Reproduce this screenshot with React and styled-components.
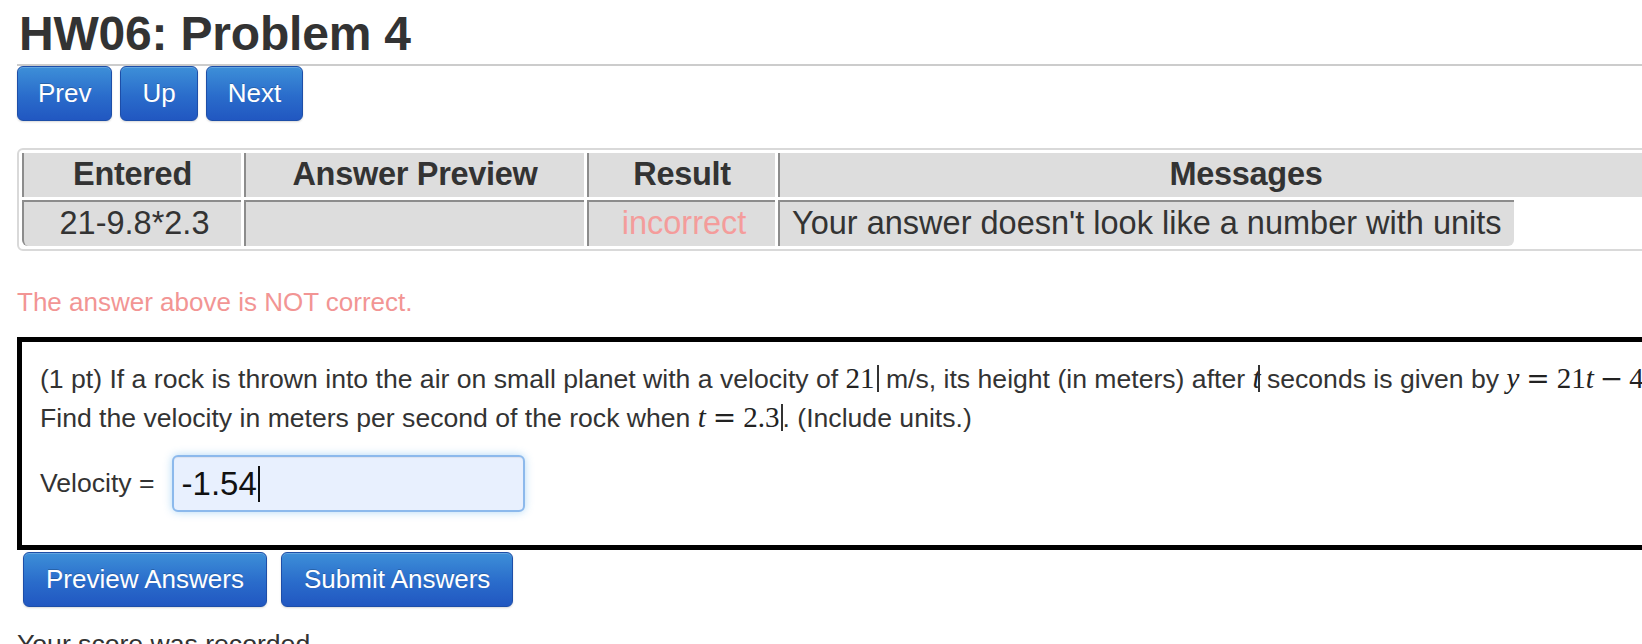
import React from 'react';
import styled, { createGlobalStyle } from 'styled-components';

const GlobalStyle = createGlobalStyle`
  html, body {
    margin: 0;
    padding: 0;
    overflow: hidden;
    background: #ffffff;
  }
  body {
    font-family: "Liberation Sans", Arial, Helvetica, sans-serif;
    color: #333333;
  }
`;

const Page = styled.div`
  width: 1900px;
  padding: 0 0 0 17px;
`;

const Title = styled.h1`
  margin: 0;
  padding: 7px 0 0 2px;
  font-size: 48px;
  line-height: 53px;
  font-weight: bold;
  color: #333333;
  letter-spacing: -0.2px;
`;

const Rule = styled.div`
  height: 2px;
  background: #cccccc;
  margin-top: 4px;
`;

const ButtonRow = styled.div`
  display: flex;
  gap: ${(p) => p.gap || 8}px;
  padding-left: ${(p) => p.indent || 0}px;
`;

const BlueButton = styled.button`
  font-family: "Liberation Sans", Arial, Helvetica, sans-serif;
  font-size: 26px;
  color: #ffffff;
  height: ${(p) => p.h || 55}px;
  padding: 0 ${(p) => p.pad || 21}px;
  border: 1px solid #1d4ea8;
  border-radius: 6px;
  background: linear-gradient(to bottom, #3d8fd8 0%, #2a6ccb 55%, #2157c1 100%);
  box-shadow: inset 0 1px 0 rgba(255, 255, 255, 0.2), 0 1px 2px rgba(0, 0, 0, 0.15);
  text-shadow: 0 -1px 0 rgba(0, 0, 0, 0.2);
  cursor: pointer;
`;

const ResultsTable = styled.table`
  margin-top: 27px;
  width: 1700px;
  border: 2px solid #d9d9d9;
  border-radius: 6px;
  border-spacing: 3px;
  border-collapse: separate;
  table-layout: fixed;
  font-size: 32.5px;
`;

const HeadCell = styled.th`
  background: #dddddd;
  border-left: 2px solid #8c8c8c;
  height: 44px;
  padding: 0 8px;
  font-weight: bold;
  color: #333333;
  text-align: center;
  letter-spacing: -0.3px;
  line-height: 1.1;
`;

const DataCell = styled.td`
  background: ${(p) => (p.blank ? 'transparent' : '#dddddd')};
  border-left: ${(p) => (p.blank ? 'none' : '2px solid #8c8c8c')};
  border-top: ${(p) => (p.blank ? 'none' : '2px solid #8c8c8c')};
  border-radius: ${(p) => p.radius || '0'};
  height: 44px;
  padding: 0 8px 0 12px;
  color: ${(p) => p.color || '#333333'};
  text-align: ${(p) => p.align || 'center'};
  white-space: nowrap;
  line-height: 1.1;
`;

const Notice = styled.p`
  margin: 36px 0 0 0;
  font-size: 26px;
  line-height: 30px;
  color: #f29594;
`;

const ProblemBox = styled.div`
  margin-top: 20px;
  border: 5px solid #000000;
  padding: 18px 18px 33px 18px;
  font-size: 26.6px;
  line-height: 39px;
  color: #333333;
`;

const Line = styled.div`
  white-space: nowrap;
  height: 39px;
`;

const MathText = styled.span`
  font-family: "Liberation Serif", "DejaVu Serif", serif;
  font-size: 29px;
  line-height: 1;
  font-style: ${(p) => (p.italic ? 'italic' : 'normal')};
  color: #222222;
`;

const MathOp = styled.span`
  font-family: "DejaVu Serif", "Liberation Serif", serif;
  font-size: 28px;
  line-height: 1;
  padding: 0 ${(p) => p.space || 7}px;
  color: #222222;
`;

const Bar = styled.span`
  display: inline-block;
  width: 2px;
  height: 27px;
  background: #333333;
  vertical-align: -4px;
  margin: 0 ${(p) => p.after || 0}px 0 ${(p) => p.before || 2}px;
`;

const AnswerRow = styled.div`
  display: flex;
  align-items: center;
  gap: 17px;
  margin-top: 17px;
`;

const Label = styled.span`
  font-size: 26.6px;
`;

const AnswerInput = styled.div`
  width: 353px;
  height: 57px;
  box-sizing: border-box;
  display: flex;
  align-items: center;
  padding-left: 8px;
  background: #e8f0fe;
  border: 2px solid #8cb9ec;
  border-radius: 6px;
  box-shadow: 0 0 8px rgba(82, 168, 236, 0.45), inset 0 1px 1px rgba(0, 0, 0, 0.06);
  font-size: 33px;
  line-height: 1;
  color: #111111;
`;

const Caret = styled.span`
  display: inline-block;
  width: 2px;
  height: 36px;
  background: #111111;
  margin-left: 1px;
`;

const SubmitArea = styled.div`
  margin-top: 2px;
`;

const Footer = styled.p`
  margin: 22px 0 0 0;
  font-size: 26.6px;
  line-height: 30px;
  color: #333333;
`;

function App() {
  return (
    <Page>
      <GlobalStyle />
      <Title>HW06: Problem 4</Title>
      <Rule />
      <ButtonRow gap={8}>
        <BlueButton pad={20}>Prev</BlueButton>
        <BlueButton>Up</BlueButton>
        <BlueButton>Next</BlueButton>
      </ButtonRow>

      <ResultsTable>
        <colgroup>
          <col style={{ width: '219px' }} />
          <col style={{ width: '340px' }} />
          <col style={{ width: '188px' }} />
          <col style={{ width: '736px' }} />
          <col />
        </colgroup>
        <thead>
          <tr>
            <HeadCell>Entered</HeadCell>
            <HeadCell>Answer Preview</HeadCell>
            <HeadCell>Result</HeadCell>
            <HeadCell colSpan={2}>Messages</HeadCell>
          </tr>
        </thead>
        <tbody>
          <tr>
            <DataCell radius="0 0 0 6px">21-9.8*2.3</DataCell>
            <DataCell />
            <DataCell color="#f49c9b">incorrect</DataCell>
            <DataCell align="left" radius="0 0 6px 0">
              Your answer doesn't look like a number with units
            </DataCell>
            <DataCell blank />
          </tr>
        </tbody>
      </ResultsTable>

      <Notice>The answer above is NOT correct.</Notice>

      <ProblemBox>
        <Line>
          (1 pt) If a rock is thrown into the air on small planet with a velocity of{' '}
          <MathText>21</MathText>
          <Bar /> m/s, its height (in meters) after <MathText italic>t</MathText>
          <Bar before={-3} /> seconds is given by <MathText italic>y</MathText>
          <MathOp space={7}>=</MathOp>
          <MathText>21</MathText>
          <MathText italic>t</MathText>
          <MathOp space={6}>−</MathOp>
          <MathText>4.9</MathText>
          <MathText italic>t</MathText>
        </Line>
        <Line>
          Find the velocity in meters per second of the rock when <MathText italic>t</MathText>
          <MathOp space={7}>=</MathOp>
          <MathText>2.3</MathText>
          <Bar before={1} />. (Include units.)
        </Line>
        <AnswerRow>
          <Label>Velocity =</Label>
          <AnswerInput>
            -1.54
            <Caret />
          </AnswerInput>
        </AnswerRow>
      </ProblemBox>

      <SubmitArea>
        <ButtonRow gap={14} indent={6}>
          <BlueButton h={55} pad={22}>Preview Answers</BlueButton>
          <BlueButton h={55} pad={22}>Submit Answers</BlueButton>
        </ButtonRow>
      </SubmitArea>

      <Footer>Your score was recorded.</Footer>
    </Page>
  );
}

export default App;
